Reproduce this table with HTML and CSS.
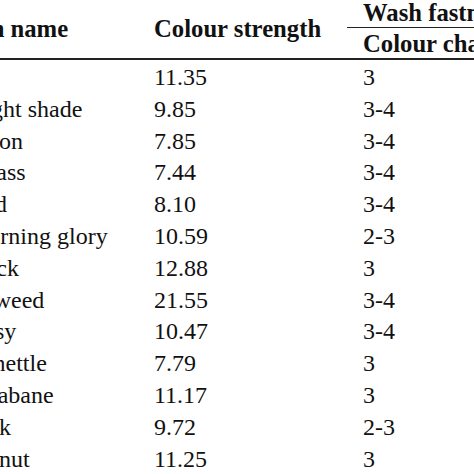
FILE: index.html
```html
<!DOCTYPE html>
<html lang="en">
<head>
<meta charset="utf-8">
<title>Colour strength and wash fastness</title>
<link rel="stylesheet" href="styles.css">
</head>
<body>
<table class="data">
  <colgroup>
    <col class="c-name">
    <col class="c-strength">
    <col class="c-change">
    <col class="c-stain">
  </colgroup>
  <thead>
    <tr>
      <th rowspan="2" class="head-main head-name">Common name</th>
      <th rowspan="2" class="head-main">Colour strength</th>
      <th colspan="2" class="head-group">Wash fastness</th>
    </tr>
    <tr>
      <th class="head-sub">Colour change</th>
      <th class="head-sub">Colour staining</th>
    </tr>
  </thead>
  <tbody>
    <tr><td>Ivy</td><td>11.35</td><td>3</td><td>4</td></tr>
    <tr><td>Night shade</td><td>9.85</td><td>3-4</td><td>4</td></tr>
    <tr><td>Pylon</td><td>7.85</td><td>3-4</td><td>4</td></tr>
    <tr><td>Kvass</td><td>7.44</td><td>3-4</td><td>4</td></tr>
    <tr><td>Bud</td><td>8.10</td><td>3-4</td><td>4</td></tr>
    <tr><td>Morning glory</td><td>10.59</td><td>2-3</td><td>4</td></tr>
    <tr><td>Dock</td><td>12.88</td><td>3</td><td>4</td></tr>
    <tr><td>Fitweed</td><td>21.55</td><td>3-4</td><td>4</td></tr>
    <tr><td>Rosy</td><td>10.47</td><td>3-4</td><td>4</td></tr>
    <tr><td>Ti nettle</td><td>7.79</td><td>3</td><td>4</td></tr>
    <tr><td>Fleabane</td><td>11.17</td><td>3</td><td>4</td></tr>
    <tr><td>Park</td><td>9.72</td><td>2-3</td><td>4</td></tr>
    <tr><td>Pignut</td><td>11.25</td><td>3</td><td>4</td></tr>
  </tbody>
</table>
</body>
</html>
```
FILE: styles.css
```css
html, body {
  margin: 0;
  padding: 0;
  background: #ffffff;
  overflow: hidden;
}

body {
  width: 474px;
  height: 474px;
}

.data {
  border-collapse: separate;
  border-spacing: 0;
  table-layout: fixed;
  width: 856px;
  margin: -1px 0 0 -49px;
  font-family: "Liberation Serif", "Times New Roman", serif;
  font-size: 24px;
  color: #111111;
}

.c-name { width: 187px; }
.c-strength { width: 209px; }
.c-change { width: 230px; }
.c-stain { width: 230px; }

.data th,
.data td {
  padding: 0 16px;
  text-align: left;
  white-space: nowrap;
}

.data th {
  font-size: 24.7px;
  font-weight: bold;
  line-height: 28px;
  vertical-align: middle;
}

.head-main {
  border-bottom: 2px solid #222222;
}

.data .head-name {
  text-indent: -60px;
}

.head-group {
  padding-bottom: 2px;
  border-bottom: 1px solid #222222;
}

.data .head-sub {
  padding-top: 2px;
  border-bottom: 2px solid #222222;
}

.data td {
  line-height: 31.8px;
  font-weight: normal;
}

.data tbody tr:first-child td {
  padding-top: 2px;
}
```
